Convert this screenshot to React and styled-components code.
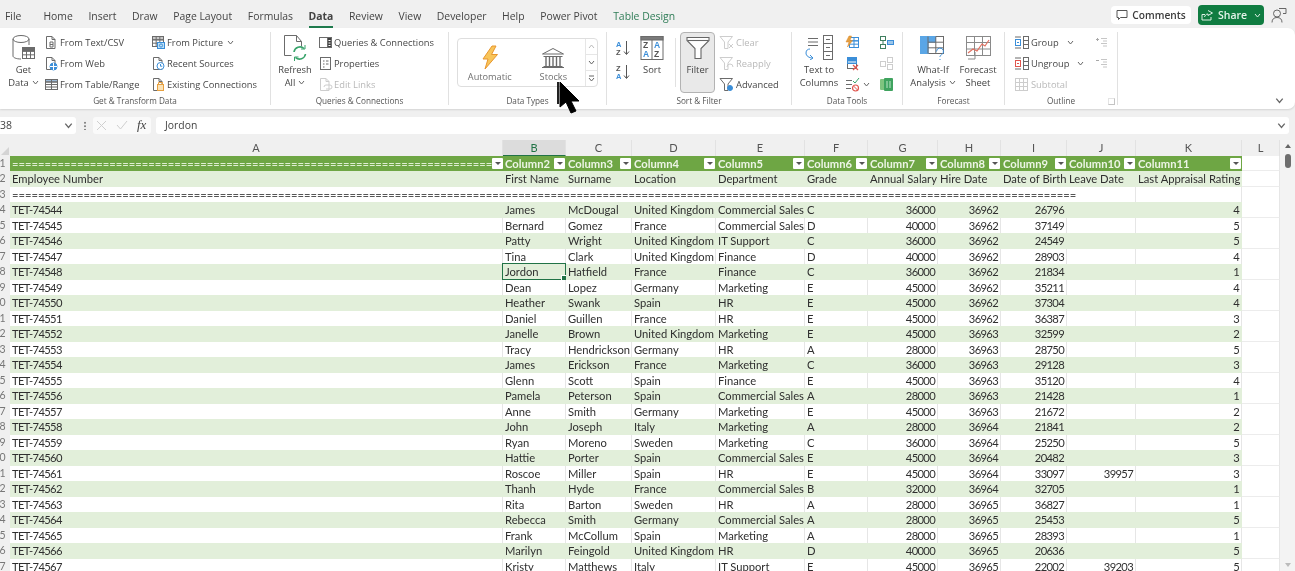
import React from 'react';
import styled, { createGlobalStyle } from 'styled-components';

const GlobalStyle = createGlobalStyle`
  html, body {
    margin: 0;
    padding: 0;
    overflow: hidden;
    background: #f0f0f0;
  }
  * { box-sizing: border-box; }
`;

const Window = styled.div`
  position: relative;
  width: 1295px;
  height: 571px;
  overflow: hidden;
  background: #f0f0f0;
  font-family: "Open Sans", "Liberation Sans", sans-serif;
  color: #444;
  filter: blur(0.3px);
`;

/* tabs + account buttons */
const TitleBar = styled.div`
  display: flex;
  align-items: center;
  height: 28px;
  padding: 3px 8px 0 5px;
`;

const Tab = styled.div`
  position: relative;
  font-size: 10.4px;
  line-height: 20px;
  margin-right: 15.6px;
  white-space: nowrap;
  color: ${(p) => (p.$green ? '#2f7d57' : '#444')};
  font-weight: ${(p) => (p.$active ? 700 : 400)};

  ${(p) => p.$first && 'margin-right: 22px;'}

  ${(p) =>
    p.$active &&
    `&::after {
      content: '';
      position: absolute;
      left: 0;
      right: 0;
      bottom: -2px;
      height: 2px;
      background: #1f7a4d;
    }`}
`;

const TitleActions = styled.div`
  display: flex;
  align-items: center;
  margin-left: auto;
  margin-top: -1px;
`;

const CommentsButton = styled.div`
  display: flex;
  align-items: center;
  justify-content: center;
  gap: 4px;
  width: 80px;
  height: 18px;
  background: #fff;
  border-radius: 4px;
  font-size: 10.2px;
  font-weight: 600;
  color: #3c3c3c;
`;

const ShareButton = styled.div`
  display: flex;
  align-items: center;
  justify-content: center;
  gap: 4px;
  width: 66px;
  height: 20px;
  margin-left: 7px;
  background: #107c41;
  border-radius: 4px;
  font-size: 10.5px;
  font-weight: 600;
  color: #e4f3ea;
`;

const CoachButton = styled.div`
  display: flex;
  margin-left: 7px;
`;

/* ribbon */
const Ribbon = styled.div`
  display: flex;
  height: 81px;
  padding: 4px 0 4px;
  background: #fff;
  border-radius: 0 7px 7px 0;
  box-shadow: 0 1px 2px rgba(0, 0, 0, 0.12);
`;

const Group = styled.div`
  position: relative;
  display: flex;
  flex-direction: column;
  flex: none;
  width: ${(p) => p.$w}px;
  padding-left: ${(p) => p.$pl || 0}px;
  border-right: 1px solid #e1e1e1;
`;

const GroupBody = styled.div`
  display: flex;
  align-items: flex-start;
  height: 63px;
`;

const GroupLabel = styled.div`
  margin-left: -${(p) => p.$pl || 0}px;
  font-size: 8.2px;
  line-height: 12px;
  height: 10px;
  text-align: center;
  color: #555;
  white-space: nowrap;
`;

const Launcher = styled.div`
  position: absolute;
  right: 2px;
  bottom: 0;
  width: 7px;
  height: 7px;
  border: 1px solid #c4c4c4;
  border-top-color: #e4e4e4;
  border-left-color: #e4e4e4;
`;

const LargeButton = styled.div`
  display: flex;
  flex-direction: column;
  align-items: center;
  flex: none;
  width: ${(p) => p.$w}px;
  margin-left: ${(p) => p.$ml || 0}px;
  padding-top: 1px;
  font-size: 9.4px;
  line-height: 13px;
  text-align: center;
  white-space: nowrap;

  ${(p) =>
    p.$pressed &&
    `height: 61px;
     padding-top: 0;
     background: #e9e9e9;
     border: 1px solid #b3b3b3;
     border-radius: 4px;`}
`;

const LargeIcon = styled.div`
  display: flex;
  align-items: center;
  justify-content: center;
  height: 29.5px;
`;

const Caret = styled.svg`
  display: inline-block;
  flex: none;
  margin-left: ${(p) => p.$ml ?? 3}px;
  vertical-align: 1px;
`;

const SmallColumn = styled.div`
  display: flex;
  flex-direction: column;
  flex: none;
  width: ${(p) => p.$w}px;
  margin-left: ${(p) => p.$ml || 0}px;
`;

const SmallButton = styled.div`
  display: flex;
  align-items: center;
  gap: ${(p) => p.$gap ?? 1}px;
  height: 21px;
  font-size: 9.35px;
  white-space: nowrap;
  color: ${(p) => (p.$off ? '#b9b9b9' : '#484848')};
`;

const Gallery = styled.div`
  display: flex;
  flex: none;
  width: 141px;
  height: 49px;
  margin: 6px 0 0 8px;
  border: 1px solid #dedede;
  border-radius: 4px;
`;

const GalleryItem = styled.div`
  display: flex;
  flex-direction: column;
  align-items: center;
  width: 64px;
  padding-top: 5px;
  font-size: 9.2px;
  line-height: 13px;
  color: #707070;
`;

const GalleryIcon = styled.div`
  display: flex;
  align-items: center;
  height: 26px;
`;

const GalleryScroll = styled.div`
  display: flex;
  flex-direction: column;
  width: 12px;
  margin-left: auto;
  border-left: 1px solid #e6e6e6;
`;

const GalleryArrow = styled.div`
  display: flex;
  flex: 1;
  align-items: center;
  justify-content: center;
  border-bottom: ${(p) => (p.$last ? 'none' : '1px solid #e6e6e6')};
`;

const SortColumn = styled.div`
  display: flex;
  flex-direction: column;
  flex: none;
  gap: 8px;
  width: 16px;
  margin-left: 9px;
  padding-top: 8px;
`;

const ThinRule = styled.div`
  flex: none;
  width: 1px;
  height: 49px;
  margin: 6px 4px 0 3px;
  background: #e1e1e1;
`;

const CollapseButton = styled.div`
  display: flex;
  margin: auto 11px 1px auto;
`;

/* formula bar */
const FormulaBar = styled.div`
  display: flex;
  align-items: center;
  height: 31px;
  padding: 1px 6px 0 0;
`;

const NameBox = styled.div`
  display: flex;
  align-items: center;
  justify-content: space-between;
  width: 76px;
  height: 17px;
  padding: 0 3px 0 0;
  background: #fff;
  border-radius: 0 3px 3px 0;
  font-size: 10.5px;
`;

const GripDots = styled.div`
  width: 2px;
  height: 9px;
  margin: 0 7px 0 8px;
  background: radial-gradient(circle, #888 1px, transparent 1px) 0 0 / 2px 3.5px;
`;

const FxBox = styled.div`
  display: flex;
  align-items: center;
  gap: 9px;
  width: 58px;
  height: 17px;
  padding-left: 3px;
  background: #fafafa;
  border-radius: 3px;
`;

const FxLabel = styled.span`
  font-family: "Liberation Serif", serif;
  font-style: italic;
  font-size: 13px;
  color: #444;
`;

const FormulaInput = styled.div`
  display: flex;
  align-items: center;
  justify-content: space-between;
  flex: 1;
  height: 17px;
  margin-left: 5px;
  padding: 0 3px 0 9px;
  background: #fff;
  border-radius: 3px;
  font-size: 10.4px;
`;

/* sheet */
const COLUMNS = '10px 493px 63px 66px 84px 89px 63px 70px 63px 66px 69px 106px 38px';

const SheetArea = styled.div`
  position: relative;
  display: flex;
  height: 431px;
  overflow: hidden;
`;

const Grid = styled.div`
  width: 1280px;
  flex: none;
  font-family: Lato, "Liberation Sans", sans-serif;
  font-size: 11.2px;
  color: #2f2f2f;
`;

const ColumnHeads = styled.div`
  display: grid;
  grid-template-columns: ${COLUMNS};
  height: 15.5px;
`;

const Corner = styled.div`
  position: relative;
  &::after {
    content: '';
    position: absolute;
    right: 1px;
    bottom: 1px;
    border: 4px solid transparent;
    border-right-color: #d4d4d4;
    border-bottom-color: #d4d4d4;
  }
`;

const ColumnHead = styled.div`
  text-align: center;
  font-size: 11px;
  line-height: 15px;
  border-right: 1px solid #e2e2e2;
  color: ${(p) => (p.$active ? '#217346' : '#555')};
  background: ${(p) => (p.$active ? '#dcdcdc' : 'transparent')};
  border-bottom: ${(p) => (p.$active ? '1px solid #217346' : 'none')};
`;

const Row = styled.div`
  display: grid;
  grid-template-columns: ${COLUMNS};
  height: 15.5px;
  line-height: 15px;
`;

const RowNumber = styled.div`
  overflow: hidden;
  direction: rtl;
  padding-right: 4.5px;
  font-size: 10.5px;
  color: #777;
  background: #f0f0f0;
`;

const Cell = styled.div`
  position: relative;
  min-width: 0;
  padding: 0 2px;
  white-space: nowrap;
  text-align: ${(p) => (p.$right ? 'right' : 'left')};
  letter-spacing: ${(p) => (p.$digits ? '-0.65px' : 'normal')};
  background: ${(p) => (p.$band ? '#e2efda' : '#fff')};
  border-right: 1px solid ${(p) => (p.$band ? '#e2efda' : '#e6e6e6')};
  border-bottom: 1px solid ${(p) => (p.$band ? '#e2efda' : '#ececec')};
  ${(p) => p.$span && `grid-column: span ${p.$span};`}
`;

const Rule = styled.span`
  color: #555;
`;

const TableHead = styled.div`
  display: flex;
  align-items: center;
  justify-content: space-between;
  min-width: 0;
  padding: 0 1px 0 2px;
  background: #6ea644;
  color: #edf5e6;
  font-weight: 700;
  white-space: nowrap;
  overflow: hidden;
`;

const HeadRule = styled.span`
  font-weight: 400;
  color: #dfeed3;
`;

const FilterButton = styled.div`
  display: flex;
  align-items: center;
  justify-content: center;
  flex: none;
  width: 11px;
  height: 11px;
  background: #fff;
  border-radius: 1px;
  &::after {
    content: '';
    border: 3px solid transparent;
    border-top: 3.5px solid #555;
    border-bottom: 0;
  }
`;

const SelectedBox = styled.div`
  position: absolute;
  inset: -1px -1px -1px -1px;
  border: 1.5px solid #217346;
  &::after {
    content: '';
    position: absolute;
    right: -2px;
    bottom: -2px;
    width: 4px;
    height: 4px;
    background: #217346;
    border: 1px solid #fff;
  }
`;

const ScrollBar = styled.div`
  position: relative;
  flex: 1;
  background: #f3f3f3;
`;

const ScrollArrow = styled.div`
  position: absolute;
  left: 5px;
  ${(p) => (p.$down ? 'bottom: 4px;' : 'top: 4px;')}
  border: 3px solid transparent;
  ${(p) => (p.$down ? 'border-top: 4px solid #bbb; border-bottom: 0;' : 'border-bottom: 4px solid #666; border-top: 0;')}
`;

const ScrollThumb = styled.div`
  position: absolute;
  left: 5px;
  top: 14px;
  width: 6px;
  height: 14px;
  border-radius: 3px;
  background: #6e6e6e;
`;

const Pointer = styled.svg`
  position: absolute;
  left: 557px;
  top: 80px;
`;

/* icons */
const G = '#6b6b6b';
const BLUE = '#3b8ed8';
const ORANGE = '#e6a040';
const RED = '#e0554d';
const GREEN = '#37a36a';
const OFF = '#cdcdcd';

const Svg = ({ w = 15, h = 15, stroke = G, children }) => (
  <svg width={w} height={h} viewBox={`0 0 ${w} ${h}`} fill="none" stroke={stroke} strokeWidth="1" style={{ flex: 'none' }}>
    {children}
  </svg>
);

const Sheet = ({ x, y, w, h, cols = 3, rows = 3, stroke = G, head = G }) => {
  const lines = [];
  for (let i = 1; i < cols; i++) lines.push(`M${x + (w * i) / cols} ${y}v${h}`);
  for (let i = 1; i < rows; i++) lines.push(`M${x} ${y + (h * i) / rows}h${w}`);
  return (
    <g stroke={stroke}>
      <rect x={x} y={y} width={w} height={h} fill="#fff" />
      <rect x={x} y={y} width={w} height={h / rows} fill={head} />
      <path d={lines.join('')} />
    </g>
  );
};

const Doc = ({ stroke = G }) => <path d="M2.5 1.5h5.5l3 3v9h-8.5zM8 1.5v3h3" stroke={stroke} />;

const GetDataIcon = () => (
  <Svg w={25} h={27}>
    <ellipse cx="10" cy="5" rx="8" ry="3.5" />
    <path d="M2 5v17c0 1.5 3 3 8 3M18 5v6" />
    <Sheet x={11.5} y={13.5} w={12} h={11} cols={3} rows={3} />
  </Svg>
);
const TextCsvIcon = () => (
  <Svg><Doc /><path d="M6 7h3v5H6zM6 9.5h3" /></Svg>
);
const WebIcon = () => (
  <Svg stroke={BLUE}><Doc stroke={G} /><circle cx="9.5" cy="10.5" r="3.5" fill={BLUE} /><path d="M6 10.5h7M9.5 7v7" stroke="#fff" /></Svg>
);
const TableRangeIcon = () => (
  <Svg><Sheet x={1.5} y={2.5} w={12} h={10} cols={2} rows={4} head="#9bb9d6" /></Svg>
);
const PictureIcon = () => (
  <Svg>
    <Sheet x={1.5} y={1.5} w={11} h={10} cols={3} rows={3} head="#c8c8c8" />
    <rect x="6.5" y="7.5" width="7" height="6" fill="#bfe0f5" stroke={BLUE} />
    <circle cx="10" cy="10.5" r="1.6" stroke={BLUE} />
  </Svg>
);
const RecentIcon = () => (
  <Svg><Doc /><circle cx="9.5" cy="10" r="3.5" fill="#fff" stroke={BLUE} /><path d="M9.5 8v2.2h1.8" stroke={BLUE} /></Svg>
);
const ExistingIcon = () => (
  <Svg><Doc /><rect x="6.5" y="7.5" width="6" height="6" fill="#fbe3b8" stroke={ORANGE} /><path d="M7.5 7.5v-2h4v2" stroke={ORANGE} /></Svg>
);
const RefreshIcon = () => (
  <Svg w={25} h={28}>
    <path d="M1.5 1.5h12l5 6v5M1.5 1.5v20h7M13.5 1.5v6h5" />
    <path d="M11 18a6 6 0 0 1 10-3.5M22.5 20a6 6 0 0 1-10 3.5" stroke={GREEN} strokeWidth="1.6" />
    <path d="M22 11v4h-4M11.5 27v-4h4" stroke={GREEN} />
  </Svg>
);
const QueriesIcon = () => (
  <Svg>
    <rect x="1.5" y="2.5" width="12" height="10" />
    <rect x="9.5" y="2.5" width="4" height="10" fill="#3f3f3f" />
    <path d="M10.5 5.5h2M10.5 8h2M10.5 10.5h2" stroke="#fff" />
  </Svg>
);
const PropertiesIcon = () => (
  <Svg>
    <rect x="2.5" y="1.5" width="10" height="12" />
    <path d="M5 5h1.5M8 5h2.5M5 8h1.5M8 8h2.5M5 11h1.5" />
  </Svg>
);
const EditLinksIcon = () => (
  <Svg stroke={OFF}><Doc stroke={OFF} /><path d="M6 10a2 2 0 0 1 2-2h4a2 2 0 0 1 0 4H8" /></Svg>
);
const BoltIcon = () => (
  <svg width="18" height="25" viewBox="0 0 18 25" fill="#f8c55a" stroke="#e8962e" strokeWidth="1">
    <path d="M11 1 2 14h5L4 24 16.5 9.5H10.5L15 1z" />
  </svg>
);
const BankIcon = () => (
  <Svg w={24} h={21}>
    <path d="M1.5 7 12 1.5 22.5 7zM2.5 9.5h19M2.5 19.5h19M1 20.5h22" />
    <path d="M5 10v9M8.5 10v9M12 10v9M15.5 10v9M19 10v9" strokeWidth="1.4" />
  </Svg>
);
const Chevron = ({ up, size = 7, color = '#666', ml = 3 }) => (
  <Caret $ml={ml} width={size} height={size - 2} viewBox="0 0 7 5" fill="none" stroke={color}>
    <path d={up ? 'M1 4l2.5-3L6 4' : 'M1 1l2.5 3L6 1'} />
  </Caret>
);
const MoreArrow = () => (
  <svg width="7" height="7" viewBox="0 0 7 7" fill="none" stroke="#666"><path d="M1 1h5M1 3l2.5 3L6 3" /></svg>
);
const SortAzIcon = ({ top, bottom }) => (
  <svg width="15" height="16" viewBox="0 0 15 16" fill="none" style={{ flex: 'none' }}>
    <text x="0" y="7" fontSize="7.5" fontWeight="700" fontFamily="Liberation Sans" fill={top === 'A' ? BLUE : '#555'}>{top}</text>
    <text x="0" y="15" fontSize="7.5" fontWeight="700" fontFamily="Liberation Sans" fill={bottom === 'A' ? BLUE : '#555'}>{bottom}</text>
    <path d="M10.5 1v13M8 11.5l2.5 3 2.5-3" stroke="#555" />
  </svg>
);
const SortIcon = () => (
  <svg width="24" height="24" viewBox="0 0 24 24" fill="#fff" stroke={G}>
    <rect x="1" y="0.5" width="22" height="23" />
    <rect x="1" y="0.5" width="22" height="3.5" fill="#7a7a7a" />
    <path d="M12 4v19.5" />
    <g stroke="none" fontSize="8.5" fontWeight="700" fontFamily="Liberation Sans">
      <text x="3" y="12" fill="#555">Z</text>
      <text x="3" y="21" fill={BLUE}>A</text>
      <text x="14" y="12" fill={BLUE}>A</text>
      <text x="14" y="21" fill="#555">Z</text>
    </g>
  </svg>
);
const FunnelIcon = () => (
  <svg width="24" height="24" viewBox="0 0 24 24" fill="#fff" stroke="#666" strokeWidth="1.1">
    <path d="M1 1.5h22v3l-8 8v10H9v-10l-8-8z" />
    <path d="M1.5 4.5h21" />
  </svg>
);
const SmallFunnel = ({ stroke = OFF, mark }) => (
  <svg width="15" height="15" viewBox="0 0 15 15" fill="#fff" stroke={stroke} style={{ flex: 'none' }}>
    <path d="M1 1.5h12.5l-4.5 5.5v6.5H5.5V7z" />
    {mark}
  </svg>
);
const TextToColumnsIcon = () => (
  <svg width="29" height="25" viewBox="0 0 29 25" fill="none" stroke={G}>
    <path d="M3 3.5h10M3 7h10M3 10.5h10" />
    <path d="M8 23c-4 0-7-2-7-5s2-4 4-4" stroke={BLUE} />
    <path d="M5 20l3 3-3 2" stroke={BLUE} />
    <rect x="18.5" y="0.5" width="9" height="24" fill="#fff" />
    <path d="M18.5 8.5h9M18.5 16.5h9M21 4.5h4M21 12.5h4M21 20.5h4" />
  </svg>
);
const FlashFillIcon = () => (
  <Svg>
    <Sheet x={4.5} y={2.5} w={9} h={10} cols={2} rows={3} stroke={BLUE} head="#fff" />
    <path d="M4 1 1 7h3l-1.5 5L7.5 5.5H5L6.5 1z" fill={ORANGE} stroke="#d9862a" strokeWidth="0.5" />
  </Svg>
);
const RemoveDupIcon = () => (
  <Svg>
    <rect x="2.5" y="1.5" width="9" height="11" />
    <rect x="2.5" y="1.5" width="9" height="3" fill={BLUE} stroke={BLUE} />
    <rect x="2.5" y="4.5" width="9" height="3" fill="#9cc6ea" stroke={BLUE} />
    <path d="M8 9l5 5M13 9l-5 5" stroke={RED} strokeWidth="1.2" />
  </Svg>
);
const ValidationIcon = () => (
  <Svg>
    <path d="M1 3.5h6M1 7.5h6M1 11.5h5" />
    <path d="M8 4l2 2 4-5" stroke={GREEN} />
    <circle cx="10.5" cy="11" r="3" stroke={RED} strokeWidth="1.2" />
    <path d="M8.5 9l4 4" stroke={RED} />
  </Svg>
);
const ConsolidateIcon = () => (
  <Svg>
    <rect x="1.5" y="1.5" width="5" height="4" stroke="#3f7f5f" />
    <rect x="1.5" y="9.5" width="5" height="4" stroke="#3f7f5f" />
    <rect x="8.5" y="5.5" width="6" height="4" fill="#9cc6ea" stroke={BLUE} />
    <path d="M4 5.5v4" stroke="#3f7f5f" />
  </Svg>
);
const RelationsIcon = () => (
  <Svg stroke={OFF}>
    <rect x="1.5" y="5.5" width="5" height="5" />
    <rect x="8.5" y="1.5" width="5" height="5" />
    <rect x="8.5" y="8.5" width="5" height="5" />
  </Svg>
);
const DataModelIcon = () => (
  <svg width="15" height="15" viewBox="0 0 15 15" style={{ flex: 'none' }}>
    <rect x="1" y="2" width="8" height="11" rx="1" fill="#7fc47f" />
    <rect x="5" y="1" width="9" height="13" rx="1" fill="#3fa35f" />
    <path d="M8 4v7M11 4v7" stroke="#bfe5c9" />
  </svg>
);
const WhatIfIcon = () => (
  <svg width="26" height="26" viewBox="0 0 26 26" fill="#fff" stroke={G}>
    <rect x="0.5" y="1.5" width="23" height="17" />
    <rect x="0.5" y="1.5" width="7.6" height="17" fill="#5aa6e6" stroke="#5aa6e6" />
    <rect x="0.5" y="1.5" width="15" height="5.7" fill="#5aa6e6" stroke="#5aa6e6" />
    <path d="M8 7.2h15.5M8 12.8h15.5M8 1.5v17M15.8 1.5v17" />
    <path d="M16.5 16.5a3.5 3.5 0 1 1 5 3.200c-1.200.7-1.500 1.300-1.500 2.300M20 24v1" stroke={BLUE} fill="none" />
  </svg>
);
const ForecastIcon = () => (
  <svg width="25" height="24" viewBox="0 0 25 24" fill="#fff" stroke="#8a8a8a">
    <rect x="0.5" y="0.5" width="24" height="19" />
    <path d="M0.5 6.5h24M0.5 13h24M8.5 0.5v19M16.5 0.5v19" />
    <path d="M2 17l5-4 4 2 5-7 3 2 4-6" stroke="#e07060" fill="none" strokeWidth="1.2" />
    <path d="M2 23h7v-7" fill="none" />
  </svg>
);
const GroupIcon = ({ color = BLUE }) => (
  <Svg>
    <rect x="1.5" y="4.5" width="5" height="6" stroke={color} />
    <path d="M3 7.5h2" stroke={color} />
    <path d="M1 2h6M1 13h6" />
    <rect x="9.5" y="1.5" width="5" height="12" />
    <path d="M9.5 5.5h5M9.5 9.5h5" />
  </Svg>
);
const SubtotalIcon = () => (
  <Svg stroke={OFF}>
    <rect x="1.5" y="1.5" width="12" height="12" />
    <path d="M1.5 5.5h12M1.5 9.5h12M5.5 1.5v12M9.5 1.5v12" />
  </Svg>
);
const OutlineSideIcon = ({ plus }) => (
  <Svg w={13} h={13} stroke="#c6c6c6">
    <path d="M6 2.5h6M8 5h4M6 7.5h6M8 10h4" />
    <path d={plus ? 'M1 3.5h3M2.5 2v3' : 'M1 3.5h3'} stroke="#a8a8a8" />
  </Svg>
);
const BubbleIcon = () => (
  <Svg w={12} h={12} stroke="#555">
    <path d="M1 1.5h10v7H4.5L2.5 10.5V8.5H1z" />
  </Svg>
);
const ShareIcon = () => (
  <Svg w={13} h={12} stroke="#dff0e6">
    <path d="M1 5.5h3M1 5.5v5.5h9V8M7 1.5l4.500 2.500L7 6.500V5C5 5 4 6.500 3.500 8" />
  </Svg>
);
const CoachIcon = () => (
  <Svg w={16} h={17} stroke="#666">
    <circle cx="6" cy="6.5" r="3.5" />
    <path d="M1 15.5c0-3.500 2-5 5-5s5 1.500 5 5M8 1.500h7v5h-3" />
  </Svg>
);
const CrossIcon = () => (
  <svg width="11" height="11" viewBox="0 0 11 11" stroke="#cfcfcf" fill="none"><path d="M1 1l9 9M10 1l-9 9" /></svg>
);
const CheckIcon = () => (
  <svg width="12" height="10" viewBox="0 0 12 10" stroke="#cfcfcf" fill="none"><path d="M1 5l3.5 4L11 1" /></svg>
);

/* data */
const TABS = ['Home', 'Insert', 'Draw', 'Page Layout', 'Formulas', 'Data', 'Review', 'View', 'Developer', 'Help', 'Power Pivot', 'Table Design'];
const LETTERS = ['A', 'B', 'C', 'D', 'E', 'F', 'G', 'H', 'I', 'J', 'K', 'L'];
const HEADS = ['Column2', 'Column3', 'Column4', 'Column5', 'Column6', 'Column7', 'Column8', 'Column9', 'Column10', 'Column11'];
const TITLES = ['Employee Number', 'First Name', 'Surname', 'Location', 'Department', 'Grade', 'Annual Salary', 'Hire Date', 'Date of Birth', 'Leave Date', 'Last Appraisal Rating'];
const UK = 'United Kingdom';
const CS = 'Commercial Sales';
const PEOPLE = [
  ['James', 'McDougal', UK, CS, 'C', 36000, 36962, 26796, '', 4],
  ['Bernard', 'Gomez', 'France', CS, 'D', 40000, 36962, 37149, '', 5],
  ['Patty', 'Wright', UK, 'IT Support', 'C', 36000, 36962, 24549, '', 5],
  ['Tina', 'Clark', UK, 'Finance', 'D', 40000, 36962, 28903, '', 4],
  ['Jordon', 'Hatfield', 'France', 'Finance', 'C', 36000, 36962, 21834, '', 1],
  ['Dean', 'Lopez', 'Germany', 'Marketing', 'E', 45000, 36962, 35211, '', 4],
  ['Heather', 'Swank', 'Spain', 'HR', 'E', 45000, 36962, 37304, '', 4],
  ['Daniel', 'Guillen', 'France', 'HR', 'E', 45000, 36962, 36387, '', 3],
  ['Janelle', 'Brown', UK, 'Marketing', 'E', 45000, 36963, 32599, '', 2],
  ['Tracy', 'Hendrickson', 'Germany', 'HR', 'A', 28000, 36963, 28750, '', 5],
  ['James', 'Erickson', 'France', 'Marketing', 'C', 36000, 36963, 29128, '', 3],
  ['Glenn', 'Scott', 'Spain', 'Finance', 'E', 45000, 36963, 35120, '', 4],
  ['Pamela', 'Peterson', 'Spain', CS, 'A', 28000, 36963, 21428, '', 1],
  ['Anne', 'Smith', 'Germany', 'Marketing', 'E', 45000, 36963, 21672, '', 2],
  ['John', 'Joseph', 'Italy', 'Marketing', 'A', 28000, 36964, 21841, '', 2],
  ['Ryan', 'Moreno', 'Sweden', 'Marketing', 'C', 36000, 36964, 25250, '', 5],
  ['Hattie', 'Porter', 'Spain', CS, 'E', 45000, 36964, 20482, '', 3],
  ['Roscoe', 'Miller', 'Spain', 'HR', 'E', 45000, 36964, 33097, 39957, 3],
  ['Thanh', 'Hyde', 'France', CS, 'B', 32000, 36964, 32705, '', 1],
  ['Rita', 'Barton', 'Sweden', 'HR', 'A', 28000, 36965, 36827, '', 1],
  ['Rebecca', 'Smith', 'Germany', CS, 'A', 28000, 36965, 25453, '', 5],
  ['Frank', 'McCollum', 'Spain', 'Marketing', 'A', 28000, 36965, 28393, '', 1],
  ['Marilyn', 'Feingold', UK, 'HR', 'D', 40000, 36965, 20636, '', 5],
  ['Kristy', 'Matthews', 'Italy', 'IT Support', 'E', 45000, 36965, 22002, 39203, 5],
];

const Small = ({ icon, children, off, gap, caret }) => (
  <SmallButton $off={off} $gap={gap}>
    {icon}
    {children}
    {caret && <Chevron />}
  </SmallButton>
);

const App = () => (
  <Window>
    <GlobalStyle />
    <TitleBar>
      <Tab $first>File</Tab>
      {TABS.map((tab) => (
        <Tab key={tab} $active={tab === 'Data'} $green={tab === 'Table Design'}>
          {tab}
        </Tab>
      ))}
      <TitleActions>
        <CommentsButton><BubbleIcon />Comments</CommentsButton>
        <ShareButton><ShareIcon />Share<Chevron color="#dff0e6" /></ShareButton>
        <CoachButton><CoachIcon /></CoachButton>
      </TitleActions>
    </TitleBar>

    <Ribbon>
      <Group $w={271} $pl={3}>
        <GroupBody>
          <LargeButton $w={41}>
            <LargeIcon><GetDataIcon /></LargeIcon>
            Get
            <span>Data<Chevron /></span>
          </LargeButton>
          <SmallColumn $w={107}>
            <Small icon={<TextCsvIcon />}>From Text/CSV</Small>
            <Small icon={<WebIcon />}>From Web</Small>
            <Small icon={<TableRangeIcon />}>From Table/Range</Small>
          </SmallColumn>
          <SmallColumn $w={118}>
            <Small icon={<PictureIcon />} caret>From Picture</Small>
            <Small icon={<RecentIcon />}>Recent Sources</Small>
            <Small icon={<ExistingIcon />}>Existing Connections</Small>
          </SmallColumn>
        </GroupBody>
        <GroupLabel $pl={3}>Get &amp; Transform Data</GroupLabel>
      </Group>

      <Group $w={178} $pl={3}>
        <GroupBody>
          <LargeButton $w={42}>
            <LargeIcon><RefreshIcon /></LargeIcon>
            Refresh
            <span>All<Chevron /></span>
          </LargeButton>
          <SmallColumn $w={125} $ml={2}>
            <Small icon={<QueriesIcon />}>Queries &amp; Connections</Small>
            <Small icon={<PropertiesIcon />}>Properties</Small>
            <Small icon={<EditLinksIcon />} off>Edit Links</Small>
          </SmallColumn>
        </GroupBody>
        <GroupLabel $pl={3}>Queries &amp; Connections</GroupLabel>
      </Group>

      <Group $w={158}>
        <GroupBody>
          <Gallery>
            <GalleryItem><GalleryIcon><BoltIcon /></GalleryIcon>Automatic</GalleryItem>
            <GalleryItem><GalleryIcon><BankIcon /></GalleryIcon>Stocks</GalleryItem>
            <GalleryScroll>
              <GalleryArrow><Chevron up ml={0} color="#bbb" /></GalleryArrow>
              <GalleryArrow><Chevron ml={0} /></GalleryArrow>
              <GalleryArrow $last><MoreArrow /></GalleryArrow>
            </GalleryScroll>
          </Gallery>
        </GroupBody>
        <GroupLabel>Data Types</GroupLabel>
      </Group>

      <Group $w={185}>
        <GroupBody>
          <SortColumn>
            <SortAzIcon top="A" bottom="Z" />
            <SortAzIcon top="Z" bottom="A" />
          </SortColumn>
          <LargeButton $w={40}>
            <LargeIcon><SortIcon /></LargeIcon>
            Sort
          </LargeButton>
          <ThinRule />
          <LargeButton $w={35} $pressed>
            <LargeIcon><FunnelIcon /></LargeIcon>
            Filter
          </LargeButton>
          <SmallColumn $w={70} $ml={4}>
            <Small gap={2} icon={<SmallFunnel mark={<path d="M10 9l4 4M14 9l-4 4" />} />} off>Clear</Small>
            <Small gap={2} icon={<SmallFunnel mark={<path d="M8 11a3 3 0 0 1 6 0" fill="none" />} />} off>Reapply</Small>
            <Small gap={2} icon={<SmallFunnel stroke={G} mark={<circle cx="11" cy="11" r="2.5" fill={BLUE} stroke={BLUE} />} />}>Advanced</Small>
          </SmallColumn>
        </GroupBody>
        <GroupLabel>Sort &amp; Filter</GroupLabel>
      </Group>

      <Group $w={111} $pl={6}>
        <GroupBody>
          <LargeButton $w={42}>
            <LargeIcon><TextToColumnsIcon /></LargeIcon>
            Text to
            <span>Columns</span>
          </LargeButton>
          <SmallColumn $w={29} $ml={5}>
            <Small icon={<FlashFillIcon />} />
            <Small icon={<RemoveDupIcon />} />
            <Small icon={<ValidationIcon />} caret gap={0} />
          </SmallColumn>
          <SmallColumn $w={16} $ml={5}>
            <Small icon={<ConsolidateIcon />} />
            <Small icon={<RelationsIcon />} />
            <Small icon={<DataModelIcon />} />
          </SmallColumn>
        </GroupBody>
        <GroupLabel $pl={6}>Data Tools</GroupLabel>
      </Group>

      <Group $w={102} $pl={5}>
        <GroupBody>
          <LargeButton $w={50}>
            <LargeIcon><WhatIfIcon /></LargeIcon>
            What-If
            <span>Analysis<Chevron /></span>
          </LargeButton>
          <LargeButton $w={40}>
            <LargeIcon><ForecastIcon /></LargeIcon>
            Forecast
            <span>Sheet</span>
          </LargeButton>
        </GroupBody>
        <GroupLabel $pl={5}>Forecast</GroupLabel>
      </Group>

      <Group $w={113} $pl={9}>
        <GroupBody>
          <SmallColumn $w={81}>
            <Small gap={2} icon={<GroupIcon />}>Group<Chevron ml={6} /></Small>
            <Small gap={2} icon={<GroupIcon color={RED} />}>Ungroup<Chevron ml={5} /></Small>
            <Small gap={2} icon={<SubtotalIcon />} off>Subtotal</Small>
          </SmallColumn>
          <SmallColumn $w={14}>
            <Small icon={<OutlineSideIcon plus />} />
            <Small icon={<OutlineSideIcon />} />
          </SmallColumn>
        </GroupBody>
        <GroupLabel $pl={9}>Outline</GroupLabel>
        <Launcher />
      </Group>

      <CollapseButton><Chevron size={9} ml={0} /></CollapseButton>
    </Ribbon>

    <FormulaBar>
      <NameBox>38<Chevron size={9} /></NameBox>
      <GripDots />
      <FxBox><CrossIcon /><CheckIcon /><FxLabel>fx</FxLabel></FxBox>
      <FormulaInput>Jordon<Chevron size={9} /></FormulaInput>
    </FormulaBar>

    <SheetArea>
      <Grid>
        <ColumnHeads>
          <Corner />
          {LETTERS.map((letter) => (
            <ColumnHead key={letter} $active={letter === 'B'}>{letter}</ColumnHead>
          ))}
        </ColumnHeads>

        <Row>
          <RowNumber>1</RowNumber>
          <TableHead>
            <HeadRule>{'='.repeat(74)}</HeadRule>
            <FilterButton />
          </TableHead>
          {HEADS.map((head) => (
            <TableHead key={head}>{head}<FilterButton /></TableHead>
          ))}
          <Cell />
        </Row>

        <Row>
          <RowNumber>2</RowNumber>
          {TITLES.map((title) => (
            <Cell key={title} $band>{title}</Cell>
          ))}
          <Cell />
        </Row>

        <Row>
          <RowNumber>3</RowNumber>
          <Cell $span={10}><Rule>{'='.repeat(164)}</Rule></Cell>
          <Cell />
          <Cell />
        </Row>

        {PEOPLE.map((person, i) => {
          const band = i % 2 === 0;
          return (
            <Row key={70000 + i}>
              <RowNumber>{i + 4}</RowNumber>
              <Cell $band={band} $digits>TET-{74544 + i}</Cell>
              {person.map((value, j) => (
                <Cell key={j} $band={band} $right={j >= 5} $digits={j >= 5}>
                  {value}
                  {i === 4 && j === 0 && <SelectedBox />}
                </Cell>
              ))}
              <Cell />
            </Row>
          );
        })}
      </Grid>
      <ScrollBar>
        <ScrollArrow />
        <ScrollThumb />
        <ScrollArrow $down />
      </ScrollBar>
    </SheetArea>

    <Pointer width="24" height="34" viewBox="0 0 24 34">
      <path d="M3 2v25l6-5 5 11 5-2-5-10h8z" fill="#000" stroke="#000" />
      <path d="M1 2v22" stroke="#222" strokeWidth="2" />
    </Pointer>
  </Window>
);

export default App;
